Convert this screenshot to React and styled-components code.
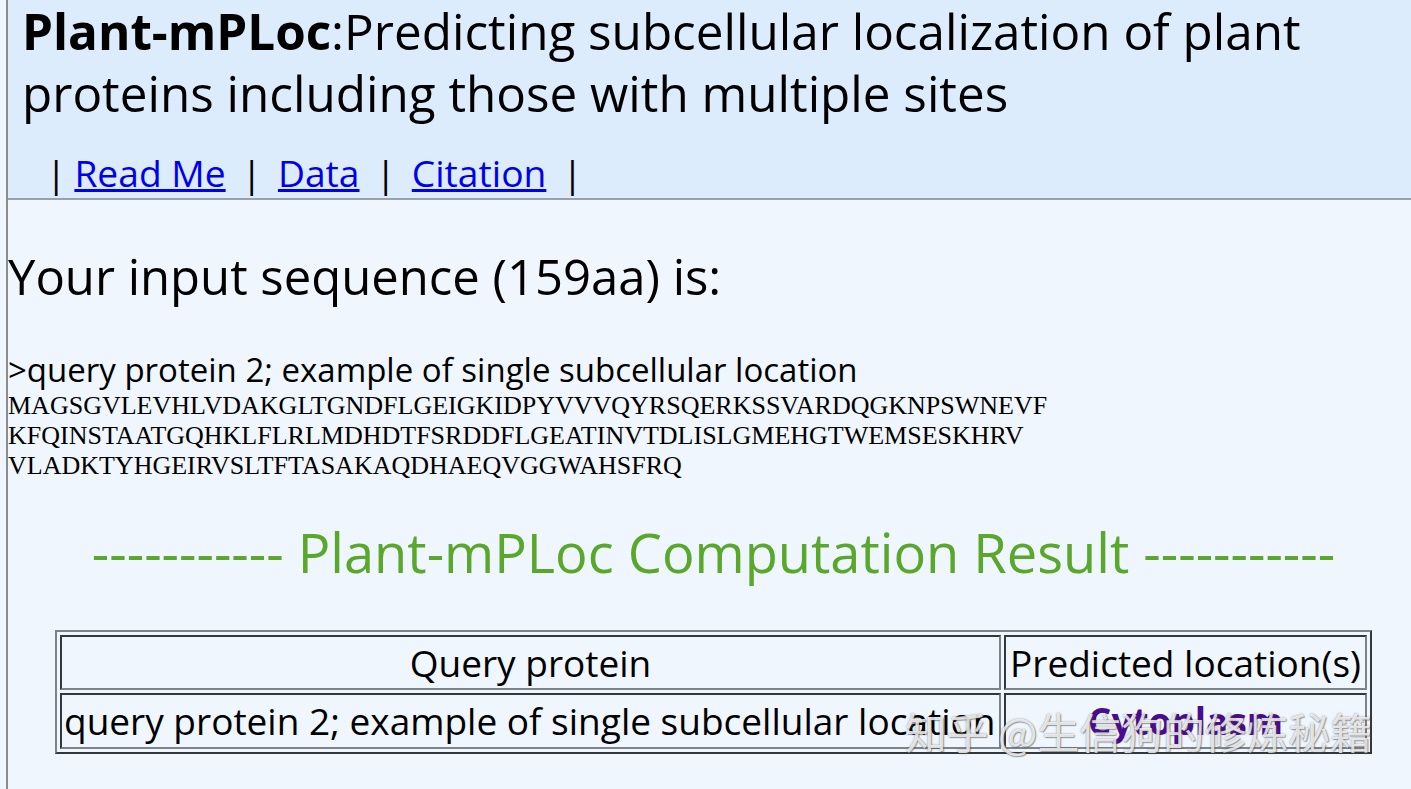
import React from "react";
import styled, { createGlobalStyle } from "styled-components";

const GlobalStyle = createGlobalStyle`
  html, body { margin: 0; padding: 0; background: #eff6fd; }
  body { font-family: "Open Sans", "Noto Sans", sans-serif; color: #000; }
`;

const Page = styled.div`
  margin-left: 6px;
  border-left: 2px solid #8c8c8c;
  min-height: 789px;
  background: #eff6fd;
`;

const Header = styled.header`
  background: #dcecfc;
  border-bottom: 2px solid #98a2ab;
  height: 200px;
  box-sizing: border-box;
  padding: 0 14px;
`;

const Title = styled.h1`
  margin: 0;
  font-size: 49.4px;
  line-height: 62px;
  font-weight: 400;
`;

const Strong = styled.b`
  font-weight: 700;
`;

const Nav = styled.nav`
  font-size: 37.2px;
  line-height: 50px;
  margin-top: 24px;
  padding-left: 24px;
  display: flex;
  white-space: pre;
  word-spacing: -1.7px;
`;

const NavLink = styled.a`
  color: #0000ee;
  text-decoration: underline;
  word-spacing: normal;
`;

const Content = styled.main`
  display: flex;
  flex-direction: column;
`;

const SectionTitle = styled.h2`
  margin: 48px 0 0;
  font-size: 49px;
  line-height: 56px;
  font-weight: 400;
`;

const QueryName = styled.div`
  margin-top: 48px;
  font-size: 33px;
  line-height: 36px;
`;

const Sequence = styled.div`
  margin-top: 3px;
  font-family: "Liberation Serif", "Times New Roman", serif;
  font-size: 26px;
  line-height: 30px;
`;

const ResultTitle = styled.div`
  margin-top: 39px;
  padding-left: 8px;
  text-align: center;
  font-size: 54.2px;
  line-height: 64px;
  color: #59a82b;
`;

const TableWrap = styled.div`
  position: relative;
  margin-top: 46px;
  margin-left: 47px;
`;

const Table = styled.table`
  width: 1317px;
  border: 2px solid;
  border-color: #7d8489 #33383c #33383c #7d8489;
  border-spacing: 3px;
  font-size: 37px;
`;

const Cell = styled.td`
  border: 2px solid;
  border-color: #33383c #7d8489 #7d8489 #33383c;
  padding: 0 2px;
  line-height: ${(p) => (p.$head ? "51px" : "52px")};
  text-align: ${(p) => (p.$center ? "center" : "left")};
  width: ${(p) => p.$w || "auto"};
  white-space: nowrap;
`;

const Location = styled.a`
  color: #4b0c8c;
  font-weight: 700;
  text-decoration: none;
`;

const Watermark = styled.div`
  position: absolute;
  left: 850px;
  top: 76px;
  font-family: "Noto Sans CJK SC", sans-serif;
  font-size: 41.8px;
  line-height: 50px;
  color: rgba(255, 255, 255, 0.8);
  text-shadow: 0 0 2px rgba(60, 60, 60, 0.55), 1px 1px 1px rgba(80, 80, 80, 0.45);
  white-space: nowrap;
  pointer-events: none;
`;

const seq = [
  "MAGSGVLEVHLVDAKGLTGNDFLGEIGKIDPYVVVQYRSQERKSSVARDQGKNPSWNEVF",
  "KFQINSTAATGQHKLFLRLMDHDTFSRDDFLGEATINVTDLISLGMEHGTWEMSESKHRV",
  "VLADKTYHGEIRVSLTFTASAKAQDHAEQVGGWAHSFRQ",
];

export default function App() {
  return (
    <>
      <GlobalStyle />
      <Page>
        <Header>
          <Title>
            <Strong>Plant-mPLoc</Strong>:Predicting subcellular localization of plant proteins including those with multiple sites
          </Title>
          <Nav>
            <span>| </span>
            <NavLink href="#">Read Me</NavLink>
            <span>  |  </span>
            <NavLink href="#">Data</NavLink>
            <span>  |  </span>
            <NavLink href="#">Citation</NavLink>
            <span>  |</span>
          </Nav>
        </Header>
        <Content>
          <SectionTitle>Your input sequence (159aa) is:</SectionTitle>
          <QueryName>&gt;query protein 2; example of single subcellular location</QueryName>
          <Sequence>
            {seq.map((s) => (
              <div key={s}>{s}</div>
            ))}
          </Sequence>
          <ResultTitle>----------- Plant-mPLoc Computation Result -----------</ResultTitle>
          <TableWrap>
            <Table>
              <tbody>
                <tr>
                  <Cell $head $center $w="933px">Query protein</Cell>
                  <Cell $head $center>Predicted location(s)</Cell>
                </tr>
                <tr>
                  <Cell>query protein 2; example of single subcellular location</Cell>
                  <Cell $center>
                    <Location href="#">Cytoplasm</Location>
                  </Cell>
                </tr>
              </tbody>
            </Table>
            <Watermark>知乎 @生信狗的修炼秘籍</Watermark>
          </TableWrap>
        </Content>
      </Page>
    </>
  );
}
